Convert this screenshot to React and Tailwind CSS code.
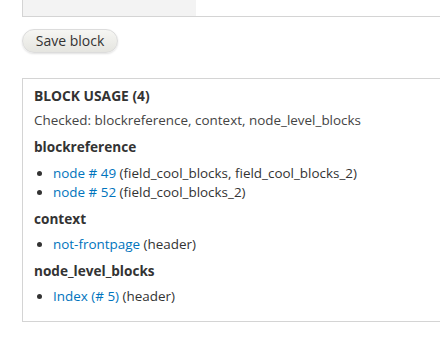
export default function App() {
  const font = { fontFamily: '"Open Sans", "Noto Sans", sans-serif' };
  return (
    <div className="w-[440px] h-[340px] bg-white overflow-hidden text-[#333] text-[13.45px]" style={font}>
      <div className="ml-[22px] h-[17px] flex border-l border-b border-[#d4d4d4]">
        <div className="w-[173px] bg-[#f3f3f3]"></div>
        <div className="flex-1 bg-white"></div>
      </div>
      <div className="ml-[22px] mt-[12px]">
        <button className="h-[24px] w-[96px] rounded-full border border-[#dcdcdc] bg-gradient-to-b from-[#f6f6f3] to-[#e5e5e0] text-[14px] text-[#333] shadow-[0_1px_2px_rgba(0,0,0,0.12)] leading-none">
          Save block
        </button>
      </div>
      <div className="ml-[22px] mt-[25px] h-[244px] border-l border-t border-b border-[#d4d4d4] pl-[11px] pt-[8px]">
        <div className="font-bold text-[13.8px] leading-[18px] uppercase">Block usage (4)</div>
        <div className="mt-[6px] leading-[18px] text-[#444]">Checked: blockreference, context, node_level_blocks</div>
        <div className="mt-[9px] font-bold text-[13.6px] leading-[18px]">blockreference</div>
        <ul className="mt-[8px] list-disc pl-[19px] leading-[19px]">
          <li><a className="text-[#0074bd]">node # 49</a> (field_cool_blocks, field_cool_blocks_2)</li>
          <li><a className="text-[#0074bd]">node # 52</a> (field_cool_blocks_2)</li>
        </ul>
        <div className="mt-[8px] font-bold text-[13.6px] leading-[18px]">context</div>
        <ul className="mt-[7px] list-disc pl-[19px] leading-[19px]">
          <li><a className="text-[#0074bd]">not-frontpage</a> (header)</li>
        </ul>
        <div className="mt-[8px] font-bold text-[13.6px] leading-[18px]">node_level_blocks</div>
        <ul className="mt-[7px] list-disc pl-[19px] leading-[19px]">
          <li><a className="text-[#0074bd]">Index (# 5)</a> (header)</li>
        </ul>
      </div>
    </div>
  );
}
